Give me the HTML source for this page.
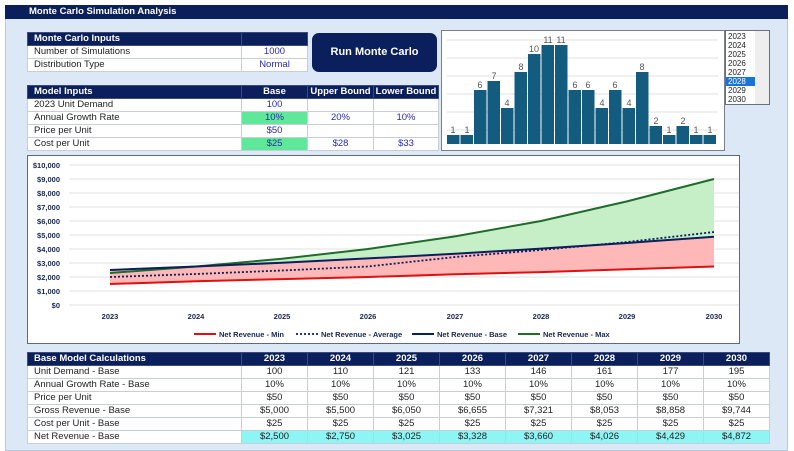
<!DOCTYPE html>
<html><head><meta charset="utf-8"><style>
*{margin:0;padding:0;box-sizing:border-box}
body{width:794px;height:451px;background:#fff;font-family:"Liberation Sans",sans-serif;position:relative;overflow:hidden;font-size:9.5px;color:#222}
.abs{position:absolute}
.panel{left:5px;top:5px;width:783px;height:446px;background:#dce8f6;border:1px solid #b8c8dc}
.title{left:5px;top:5px;width:783px;height:14px;background:#0b1f5c;color:#fff;font-weight:bold;font-size:9.5px;padding-left:24px;line-height:14px}
table{border-collapse:collapse;position:absolute;background:#fff;table-layout:fixed}
td{border:1px solid #c9ced6;padding:0 6px;height:13px;line-height:12px;white-space:nowrap;overflow:hidden}
tr.h td{background:#0b1f5c;color:#fff;font-weight:bold;border-color:#3a4a7a}
.c{text-align:center}.b{color:#2a2ab0}
.g{background:#5fe89a}.cy{background:#8ef5f5}
</style></head><body>
<div class="abs panel"></div>
<div class="abs title">Monte Carlo Simulation Analysis</div>

<table style="left:27px;top:32px;width:280px">
<colgroup><col style="width:214px"><col style="width:66px"></colgroup>
<tr class="h"><td>Monte Carlo Inputs</td><td></td></tr>
<tr><td>Number of Simulations</td><td class="c b">1000</td></tr>
<tr><td>Distribution Type</td><td class="c b">Normal</td></tr>
</table>
<div class="abs" style="left:312px;top:33px;width:125px;height:39px;background:#0b1f5c;border-radius:7px;color:#fff;font-weight:bold;font-size:11px;text-align:center;line-height:39px">Run Monte Carlo</div>

<table style="left:27px;top:85px;width:411px">
<colgroup><col style="width:214px"><col style="width:66px"><col style="width:66px"><col style="width:65px"></colgroup>
<tr class="h"><td>Model Inputs</td><td class="c">Base</td><td class="c" style="padding:0">Upper Bound</td><td class="c" style="padding:0">Lower Bound</td></tr>
<tr><td>2023 Unit Demand</td><td class="c b">100</td><td></td><td></td></tr>
<tr><td>Annual Growth Rate</td><td class="c b g">10%</td><td class="c b">20%</td><td class="c b">10%</td></tr>
<tr><td>Price per Unit</td><td class="c b">$50</td><td></td><td></td></tr>
<tr><td>Cost per Unit</td><td class="c b g">$25</td><td class="c b">$28</td><td class="c b">$33</td></tr>
</table>

<svg class="abs" style="left:441px;top:30px" width="284" height="121">
<rect x="0.5" y="0.5" width="283" height="120" fill="#fff" stroke="#7a8088"/>
<g stroke="#e2e2e2">
<line x1="6" x2="277" y1="10" y2="10"/><line x1="6" x2="277" y1="28" y2="28"/><line x1="6" x2="277" y1="46" y2="46"/><line x1="6" x2="277" y1="64" y2="64"/><line x1="6" x2="277" y1="82" y2="82"/><line x1="6" x2="277" y1="100" y2="100"/></g>
<g fill="#135c80">
<rect x="6" y="105" width="12.5" height="9"/><rect x="19.5" y="105" width="12.5" height="9"/><rect x="33" y="60" width="12.5" height="54"/><rect x="46.5" y="51" width="12.5" height="63"/><rect x="60" y="78" width="12.5" height="36"/><rect x="73.5" y="42" width="12.5" height="72"/><rect x="87" y="24" width="12.5" height="90"/><rect x="100.5" y="15" width="12.5" height="99"/><rect x="114" y="15" width="12.5" height="99"/><rect x="127.5" y="60" width="12.5" height="54"/><rect x="141" y="60" width="12.5" height="54"/><rect x="154.5" y="78" width="12.5" height="36"/><rect x="168" y="60" width="12.5" height="54"/><rect x="181.5" y="78" width="12.5" height="36"/><rect x="195" y="42" width="12.5" height="72"/><rect x="208.5" y="96" width="12.5" height="18"/><rect x="222" y="105" width="12.5" height="9"/><rect x="235.5" y="96" width="12.5" height="18"/><rect x="249" y="105" width="12.5" height="9"/><rect x="262.5" y="105" width="12.5" height="9"/>
</g>
<g fill="#555" font-size="9" text-anchor="middle" font-family="Liberation Sans">
<text x="12" y="103">1</text><text x="26" y="103">1</text><text x="39" y="58">6</text><text x="53" y="49">7</text><text x="66" y="76">4</text><text x="80" y="40">8</text><text x="93" y="22">10</text><text x="107" y="13">11</text><text x="120" y="13">11</text><text x="134" y="58">6</text><text x="147" y="58">6</text><text x="161" y="76">4</text><text x="174" y="58">6</text><text x="188" y="76">4</text><text x="201" y="40">8</text><text x="215" y="94">2</text><text x="228" y="103">1</text><text x="242" y="94">2</text><text x="255" y="103">1</text><text x="269" y="103">1</text>
</g>
</svg>

<div class="abs" style="left:725px;top:30px;width:45px;height:75px;background:#fff;border:1px solid #6a7078;font-size:8px;line-height:9px;padding-top:1px">
<div style="position:absolute;right:0;top:0;width:14px;height:73px;background:#eee"></div>
<div style="padding-left:2px">2023</div><div style="padding-left:2px">2024</div><div style="padding-left:2px">2025</div><div style="padding-left:2px">2026</div><div style="padding-left:2px">2027</div><div style="padding-left:2px;background:#1a73d9;color:#fff;width:29px">2028</div><div style="padding-left:2px">2029</div><div style="padding-left:2px">2030</div>
</div>

<svg class="abs" style="left:27px;top:155px" width="713" height="189" font-family="Liberation Sans">
<rect x="0.5" y="0.5" width="712" height="188" fill="#fff" stroke="#5a6a80"/>
<g stroke="#e0e0e0">
<line x1="42" x2="712" y1="10" y2="10"/><line x1="42" x2="712" y1="24" y2="24"/><line x1="42" x2="712" y1="38" y2="38"/><line x1="42" x2="712" y1="52" y2="52"/><line x1="42" x2="712" y1="66" y2="66"/><line x1="42" x2="712" y1="80" y2="80"/><line x1="42" x2="712" y1="94" y2="94"/><line x1="42" x2="712" y1="108" y2="108"/><line x1="42" x2="712" y1="122" y2="122"/><line x1="42" x2="712" y1="136" y2="136"/><line x1="42" x2="712" y1="150" y2="150"/></g>
<g fill="#1a2750" font-size="7.5" font-weight="bold" text-anchor="end">
<text x="33" y="13">$10,000</text><text x="33" y="27">$9,000</text><text x="33" y="41">$8,000</text><text x="33" y="55">$7,000</text><text x="33" y="69">$6,000</text><text x="33" y="83">$5,000</text><text x="33" y="97">$4,000</text><text x="33" y="111">$3,000</text><text x="33" y="125">$2,000</text><text x="33" y="139">$1,000</text><text x="33" y="153">$0</text>
</g>
<g fill="#1a2750" font-size="7.5" font-weight="bold" text-anchor="middle">
<text x="83" y="164">2023</text><text x="169" y="164">2024</text><text x="255" y="164">2025</text><text x="341" y="164">2026</text><text x="428" y="164">2027</text><text x="514" y="164">2028</text><text x="600" y="164">2029</text><text x="687" y="164">2030</text>
</g>
<polygon fill="#c6efc8" points="83,118 169,111.5 255,103.8 341,94 428,81.4 514,66 600,46.4 687,24 687,81.8 600,88 514,93.6 428,98.8 341,103.4 255,107.7 169,111.5 83,115"/>
<polygon fill="#ffb8b8" points="83,115 169,111.5 255,107.7 341,103.4 428,98.8 514,93.6 600,88 687,81.8 687,111.5 600,114.3 514,117.1 428,119.2 341,122 255,124.1 169,126.2 83,129"/>
<polyline fill="none" stroke="#e01010" stroke-width="2" points="83,129 169,126.2 255,124.1 341,122 428,119.2 514,117.1 600,114.3 687,111.5"/>
<polyline fill="none" stroke="#1e6b2a" stroke-width="2" points="83,118 169,111.5 255,103.8 341,94 428,81.4 514,66 600,46.4 687,24"/>
<polyline fill="none" stroke="#0b1f5c" stroke-width="2" points="83,115 169,111.5 255,107.7 341,103.4 428,98.8 514,93.6 600,88 687,81.8"/>
<polyline fill="none" stroke="#0b1f5c" stroke-width="1.8" stroke-dasharray="2,2" points="83,122 169,119 255,115.5 341,111.5 428,102 514,95 600,87 687,77"/>
<g font-size="7.5" font-weight="bold" fill="#1a2750">
<line x1="167" x2="189" y1="179" y2="179" stroke="#e01010" stroke-width="2"/><text x="192" y="182">Net Revenue - Min</text>
<line x1="269" x2="291" y1="179" y2="179" stroke="#0b1f5c" stroke-width="1.8" stroke-dasharray="2,2"/><text x="294" y="182">Net Revenue - Average</text>
<line x1="385" x2="407" y1="179" y2="179" stroke="#0b1f5c" stroke-width="2"/><text x="410" y="182">Net Revenue - Base</text>
<line x1="491" x2="513" y1="179" y2="179" stroke="#1e6b2a" stroke-width="2"/><text x="516" y="182">Net Revenue - Max</text>
</g>
</svg>

<table style="left:27px;top:352px;width:742px">
<colgroup><col style="width:214px"><col span="8" style="width:66px"></colgroup>
<tr class="h"><td>Base Model Calculations</td><td class="c">2023</td><td class="c">2024</td><td class="c">2025</td><td class="c">2026</td><td class="c">2027</td><td class="c">2028</td><td class="c">2029</td><td class="c">2030</td></tr>
<tr><td>Unit Demand - Base</td><td class="c">100</td><td class="c">110</td><td class="c">121</td><td class="c">133</td><td class="c">146</td><td class="c">161</td><td class="c">177</td><td class="c">195</td></tr>
<tr><td>Annual Growth Rate - Base</td><td class="c">10%</td><td class="c">10%</td><td class="c">10%</td><td class="c">10%</td><td class="c">10%</td><td class="c">10%</td><td class="c">10%</td><td class="c">10%</td></tr>
<tr><td>Price per Unit</td><td class="c">$50</td><td class="c">$50</td><td class="c">$50</td><td class="c">$50</td><td class="c">$50</td><td class="c">$50</td><td class="c">$50</td><td class="c">$50</td></tr>
<tr><td>Gross Revenue - Base</td><td class="c">$5,000</td><td class="c">$5,500</td><td class="c">$6,050</td><td class="c">$6,655</td><td class="c">$7,321</td><td class="c">$8,053</td><td class="c">$8,858</td><td class="c">$9,744</td></tr>
<tr><td>Cost per Unit - Base</td><td class="c">$25</td><td class="c">$25</td><td class="c">$25</td><td class="c">$25</td><td class="c">$25</td><td class="c">$25</td><td class="c">$25</td><td class="c">$25</td></tr>
<tr><td>Net Revenue - Base</td><td class="c cy">$2,500</td><td class="c cy">$2,750</td><td class="c cy">$3,025</td><td class="c cy">$3,328</td><td class="c cy">$3,660</td><td class="c cy">$4,026</td><td class="c cy">$4,429</td><td class="c cy">$4,872</td></tr>
</table>
</body></html>
